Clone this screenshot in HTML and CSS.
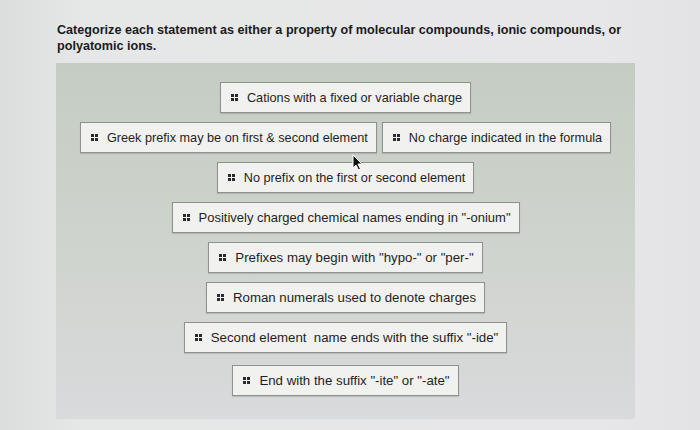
FILE: index.html
```html
<!DOCTYPE html>
<html>
<head>
<meta charset="utf-8">
<link rel="stylesheet" href="styles.css">
</head>
<body>
<div class="page">
  <p class="prompt">Categorize each statement as either a property of molecular compounds, ionic compounds, or polyatomic ions.</p>
  <div class="panel">
    <div class="row"><div class="chip"><svg class="grip" viewBox="0 0 7 7" width="7" height="7"><rect x="0" y="0" width="3" height="3"/><rect x="4" y="0" width="3" height="3"/><rect x="0" y="4" width="3" height="3"/><rect x="4" y="4" width="3" height="3"/></svg><span>Cations with a fixed or variable charge</span></div></div>
    <div class="row"><div class="chip"><svg class="grip" viewBox="0 0 7 7" width="7" height="7"><rect x="0" y="0" width="3" height="3"/><rect x="4" y="0" width="3" height="3"/><rect x="0" y="4" width="3" height="3"/><rect x="4" y="4" width="3" height="3"/></svg><span>Greek prefix may be on first &amp; second element</span></div><div class="chip"><svg class="grip" viewBox="0 0 7 7" width="7" height="7"><rect x="0" y="0" width="3" height="3"/><rect x="4" y="0" width="3" height="3"/><rect x="0" y="4" width="3" height="3"/><rect x="4" y="4" width="3" height="3"/></svg><span>No charge indicated in the formula</span></div></div>
    <div class="row"><div class="chip"><svg class="grip" viewBox="0 0 7 7" width="7" height="7"><rect x="0" y="0" width="3" height="3"/><rect x="4" y="0" width="3" height="3"/><rect x="0" y="4" width="3" height="3"/><rect x="4" y="4" width="3" height="3"/></svg><span>No prefix on the first or second element</span></div></div>
    <div class="row"><div class="chip mid"><svg class="grip" viewBox="0 0 7 7" width="7" height="7"><rect x="0" y="0" width="3" height="3"/><rect x="4" y="0" width="3" height="3"/><rect x="0" y="4" width="3" height="3"/><rect x="4" y="4" width="3" height="3"/></svg><span>Positively charged chemical names ending in "-onium"</span></div></div>
    <div class="row"><div class="chip near"><svg class="grip" viewBox="0 0 7 7" width="7" height="7"><rect x="0" y="0" width="3" height="3"/><rect x="4" y="0" width="3" height="3"/><rect x="0" y="4" width="3" height="3"/><rect x="4" y="4" width="3" height="3"/></svg><span>Prefixes may begin with "hypo-" or "per-"</span></div></div>
    <div class="row"><div class="chip near"><svg class="grip" viewBox="0 0 7 7" width="7" height="7"><rect x="0" y="0" width="3" height="3"/><rect x="4" y="0" width="3" height="3"/><rect x="0" y="4" width="3" height="3"/><rect x="4" y="4" width="3" height="3"/></svg><span>Roman numerals used to denote charges</span></div></div>
    <div class="row"><div class="chip near"><svg class="grip" viewBox="0 0 7 7" width="7" height="7"><rect x="0" y="0" width="3" height="3"/><rect x="4" y="0" width="3" height="3"/><rect x="0" y="4" width="3" height="3"/><rect x="4" y="4" width="3" height="3"/></svg><span>Second element&nbsp; name ends with the suffix "-ide"</span></div></div>
    <div class="row last"><div class="chip near"><svg class="grip" viewBox="0 0 7 7" width="7" height="7"><rect x="0" y="0" width="3" height="3"/><rect x="4" y="0" width="3" height="3"/><rect x="0" y="4" width="3" height="3"/><rect x="4" y="4" width="3" height="3"/></svg><span>End with the suffix "-ite" or "-ate"</span></div></div>
  </div>
  <svg class="cursor" viewBox="0 0 11 17" width="11" height="17"><path d="M1 1 L1 14 L4 11 L6.5 16 L8.5 15 L6 10 L10 10 Z" fill="#111" stroke="#fff" stroke-width="1" stroke-linejoin="round"/></svg>
</div>
</body>
</html>
```
FILE: styles.css
```css
html, body {
  margin: 0;
  padding: 0;
}
body {
  width: 700px;
  height: 430px;
  overflow: hidden;
  background: linear-gradient(90deg, #dcdddd 0%, #e6e7e7 12%, #e7e7e9 85%, #e3e3e6 100%);
  font-family: "Liberation Sans", Arial, sans-serif;
  color: #1e1f22;
}
.page {
  position: relative;
  height: 430px;
  padding-top: 22px;
  box-sizing: border-box;
}
.prompt {
  margin: 0 0 0 57px;
  width: 590px;
  font-weight: bold;
  font-size: 12.6px;
  line-height: 16px;
  color: #1a1b1e;
}
.panel {
  margin: 9px 0 0 56px;
  width: 579px;
  height: 356px;
  box-sizing: border-box;
  padding-top: 19px;
  display: flex;
  flex-direction: column;
  align-items: center;
  gap: 9px;
  background: linear-gradient(180deg, #c5cdc3 0%, #cbd1c9 35%, #d3d6d3 70%, #d9dadc 100%);
}
.row {
  display: flex;
  justify-content: center;
  gap: 5px;
}
.row.last {
  margin-top: 3px;
}
.chip {
  height: 31px;
  box-sizing: border-box;
  display: flex;
  align-items: center;
  gap: 9px;
  padding: 0 8px 0 10px;
  background: #f1f1ef;
  border: 1px solid #8e918e;
  box-shadow: 0 1px 1px rgba(0,0,0,0.12);
  font-size: 12.7px;
  white-space: nowrap;
  color: #1e1f22;
}
.chip.mid {
  font-size: 13px;
}
.chip.near {
  font-size: 13.25px;
}
.grip {
  flex: none;
  fill: #2a2b2e;
}
.cursor {
  position: absolute;
  left: 352px;
  top: 154px;
}
```
